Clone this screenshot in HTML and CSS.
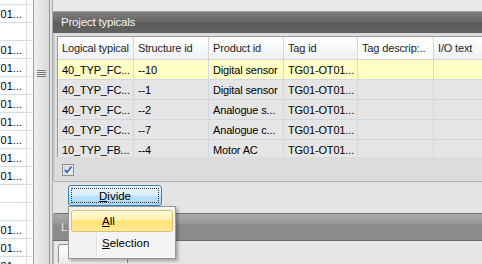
FILE: index.html
```html
<!DOCTYPE html>
<html lang="en">

<head>
    <meta charset="UTF-8">
    <title>Project typicals</title>
    <link rel="stylesheet" href="styles.css">
</head>

<body>
    <div class="screen">
        <div class="side-grid">
            <div class="side-rows">
                <div class="side-row"><span class="side-cell"></span></div>
                <div class="side-row"><span class="side-cell"><span>OT01...</span></span></div>
                <div class="side-row"><span class="side-cell"></span></div>
                <div class="side-row"><span class="side-cell"><span>OT01...</span></span></div>
                <div class="side-row"><span class="side-cell"><span>OT01...</span></span></div>
                <div class="side-row"><span class="side-cell"><span>OT01...</span></span></div>
                <div class="side-row"><span class="side-cell"><span>OT01...</span></span></div>
                <div class="side-row"><span class="side-cell"><span>OT01...</span></span></div>
                <div class="side-row"><span class="side-cell"><span>OT01...</span></span></div>
                <div class="side-row"><span class="side-cell"><span>OT01...</span></span></div>
                <div class="side-row"><span class="side-cell"><span>OT01...</span></span></div>
                <div class="side-row"><span class="side-cell"></span></div>
                <div class="side-row"><span class="side-cell"></span></div>
                <div class="side-row"><span class="side-cell"><span>OT01...</span></span></div>
                <div class="side-row"><span class="side-cell"><span>OT01...</span></span></div>
                <div class="side-row"><span class="side-cell"><span>OT01...</span></span></div>
            </div>
        </div>

        <div class="splitter"><span class="grip"></span></div>

        <div class="dock">
            <div class="dock-inner">
                <div class="prev-panel"></div>
                <div class="panel-head">Project typicals</div>
                <div class="panel-body">
                    <div class="grid">
                        <div class="grid-row grid-head">
                            <div class="cell">Logical typical</div>
                            <div class="cell">Structure id</div>
                            <div class="cell">Product id</div>
                            <div class="cell">Tag id</div>
                            <div class="cell cell-hot">Tag descrip:..</div>
                            <div class="cell">I/O text</div>
                        </div>
                        <div class="grid-row row-current">
                            <div class="cell">40_TYP_FC...</div>
                            <div class="cell">--10</div>
                            <div class="cell">Digital sensor</div>
                            <div class="cell">TG01-OT01...</div>
                            <div class="cell"></div>
                            <div class="cell"></div>
                        </div>
                        <div class="grid-row">
                            <div class="cell">40_TYP_FC...</div>
                            <div class="cell">--1</div>
                            <div class="cell">Digital sensor</div>
                            <div class="cell">TG01-OT01...</div>
                            <div class="cell"></div>
                            <div class="cell"></div>
                        </div>
                        <div class="grid-row">
                            <div class="cell">40_TYP_FC...</div>
                            <div class="cell">--2</div>
                            <div class="cell">Analogue s...</div>
                            <div class="cell">TG01-OT01...</div>
                            <div class="cell"></div>
                            <div class="cell"></div>
                        </div>
                        <div class="grid-row">
                            <div class="cell">40_TYP_FC...</div>
                            <div class="cell">--7</div>
                            <div class="cell">Analogue c...</div>
                            <div class="cell">TG01-OT01...</div>
                            <div class="cell"></div>
                            <div class="cell"></div>
                        </div>
                        <div class="grid-row">
                            <div class="cell">10_TYP_FB...</div>
                            <div class="cell">--4</div>
                            <div class="cell">Motor AC</div>
                            <div class="cell">TG01-OT01...</div>
                            <div class="cell"></div>
                            <div class="cell"></div>
                        </div>
                    </div>
                    <div class="check-row">
                        <svg class="check" width="12" height="12" viewBox="0 0 12 12">
                            <defs>
                                <linearGradient id="boxfill" x1="0" y1="0" x2="1" y2="1">
                                    <stop offset="0" stop-color="#d6dde6" />
                                    <stop offset="1" stop-color="#ffffff" />
                                </linearGradient>
                            </defs>
                            <rect x="0.5" y="0.5" width="11" height="11" fill="#f4f4f4" stroke="#8e8f8f" />
                            <rect x="2" y="2" width="8" height="8" fill="url(#boxfill)" stroke="#b8bfc8" stroke-width="0.6" />
                            <path d="M2.8 5.8 L5 8.4 L9.4 2.8" fill="none" stroke="#3d60b8" stroke-width="1.8" />
                        </svg>
                    </div>
                </div>
                <div class="button-row">
                    <button class="btn"><u>D</u>ivide</button>
                </div>
                <div class="panel2">
                    <div class="panel2-head">Li</div>
                    <div class="panel2-body">
                        <span class="tab"></span>
                    </div>
                </div>
            </div>
        </div>

        <div class="menu">
            <div class="menu-item hot"><u>A</u>ll</div>
            <div class="menu-item"><u>S</u>election</div>
        </div>
    </div>
</body>

</html>
```

FILE: styles.css
```css
* {
    margin: 0;
    padding: 0;
    box-sizing: border-box;
}

body {
    font-family: "Liberation Sans", Arial, sans-serif;
    font-size: 11px;
    color: #000;
}

.screen {
    position: relative;
    display: flex;
    width: 482px;
    height: 264px;
    overflow: hidden;
    background: #e3e3e3;
}

/* grid on the left, scrolled off to the side */
.side-grid {
    flex: none;
    width: 34px;
    background: #fff;
    border-right: 1px solid #a3a3a3;
    overflow: hidden;
}

.side-rows {
    margin-top: -13px;
}

.side-row {
    display: flex;
    height: 18px;
    border-bottom: 1px solid #d4dde8;
}

.side-cell {
    display: flex;
    justify-content: flex-end;
    align-items: center;
    width: 27px;
    padding-right: 4px;
    border-right: 1px solid #d4dde8;
    overflow: hidden;
    white-space: nowrap;
}

.side-cell span {
    flex: none;
}

/* splitter */
.splitter {
    flex: none;
    width: 16px;
    background: linear-gradient(90deg, #efefef, #e3e3e3 60%, #d9d9d9);
    border-right: 1px solid #979797;
}

.grip {
    display: block;
    width: 9px;
    height: 7px;
    margin: 70px auto 0;
    background: repeating-linear-gradient(#7a7a7a 0 1px, transparent 1px 2px);
}

/* docked panels */
.dock {
    flex: 1;
    display: flex;
    padding-left: 2px;
    background: #e1e1e1;
}

.dock-inner {
    flex: 1;
    display: flex;
    flex-direction: column;
    border-left: 1px solid #a9a9a9;
    background: #e4e4e4;
}

.prev-panel {
    height: 12px;
    background: #e8e8e8;
    border-bottom: 1px solid #a5a5a5;
}

.panel-head {
    height: 21px;
    line-height: 21px;
    padding-left: 8px;
    font-size: 11.5px;
    color: #f4f4f4;
    letter-spacing: -0.2px;
    background: linear-gradient(#7e7e7e, #676767 45%, #5c5c5c 55%, #626262);
}

.panel-body {
    height: 149px;
    padding: 3px 0 0 3px;
    border-left: 1px solid #c3c3c3;
    border-bottom: 1px solid #b2b2b2;
    border-bottom-left-radius: 3px;
    background: #dcdcdc;
    overflow: hidden;
}

.grid {
    width: 460px;
    height: 121px;
    border-top: 1px solid #9c9c9c;
    border-left: 1px solid #9c9c9c;
    background: #e5e5e5;
    overflow: hidden;
}

.grid-row {
    display: grid;
    grid-template-columns: 76px 75px 75px 74px 76px 90px;
}

.cell {
    display: flex;
    align-items: center;
    height: 20px;
    padding-left: 4px;
    border-right: 1px solid #d0d8e3;
    border-bottom: 1px solid #d0d8e3;
    background: #e5e5e5;
    white-space: nowrap;
    overflow: hidden;
    letter-spacing: -0.15px;
}

.grid-head .cell {
    height: 23px;
    color: #1e1e1e;
    background: linear-gradient(#ffffff, #f7f8f9 50%, #eff0f2);
    border-right-color: #d5d5d5;
    border-bottom-color: #d5d5d5;
}

.grid-head .cell-hot {
    background: linear-gradient(#ffffff, #fbfbfb);
}

.row-current .cell {
    background: #ffffc6;
}

.check-row {
    display: flex;
    margin-top: 7px;
    padding-left: 5px;
}

.check {
    display: block;
}

.button-row {
    height: 31px;
    padding: 3px 0 0 15px;
}

.btn {
    position: relative;
    width: 94px;
    height: 21px;
    font-family: inherit;
    font-size: 11.5px;
    color: #000;
    border: 1px solid #3c7fb1;
    border-radius: 3px;
    background: linear-gradient(#eaf5fd, #d9effc 48%, #bee3fb 52%, #a9d6f5);
}

.btn::after {
    content: "";
    position: absolute;
    left: 2px;
    top: 2px;
    right: 2px;
    bottom: 2px;
    border: 1px dotted #333;
}

.panel2 {
    flex: 1;
    display: flex;
    flex-direction: column;
}

.panel2-head {
    height: 28px;
    line-height: 26px;
    padding-left: 8px;
    font-size: 11.5px;
    color: #e6e6e6;
    border-top: 1px solid #707070;
    border-bottom: 1px solid #6c6c6c;
    border-top-left-radius: 3px;
    background: linear-gradient(#aaaaaa, #9c9c9c 30%, #8b8b8b 45%, #8c8c8c);
}

.panel2-body {
    flex: 1;
    padding: 3px 0 0 4px;
    border-left: 1px solid #b8b8b8;
    background: #e6e6e6;
}

.tab {
    display: block;
    width: 70px;
    height: 19px;
    border: 1px solid #8e9297;
    border-bottom: none;
    border-radius: 3px 3px 0 0;
    background: linear-gradient(#ffffff, #ececec);
}

/* context menu */
.menu {
    position: absolute;
    left: 68px;
    top: 206px;
    width: 108px;
    height: 53px;
    padding: 3px 2px 4px;
    font-size: 11.5px;
    border: 1px solid #979797;
    background: linear-gradient(90deg, #f1f1f1 0 27px, #e2e3e3 27px 28px, #ffffff 28px 29px, #f5f5f5 29px);
    box-shadow: 2px 2px 3px rgba(0, 0, 0, 0.3);
}

.menu-item {
    display: flex;
    align-items: center;
    height: 22px;
    padding-left: 30px;
    border: 1px solid transparent;
    border-radius: 3px;
}

.menu-item.hot {
    border-color: #e3c05f;
    background: linear-gradient(#fffadc, #fff1b2 42%, #ffe171 52%, #ffec9e);
}
```
